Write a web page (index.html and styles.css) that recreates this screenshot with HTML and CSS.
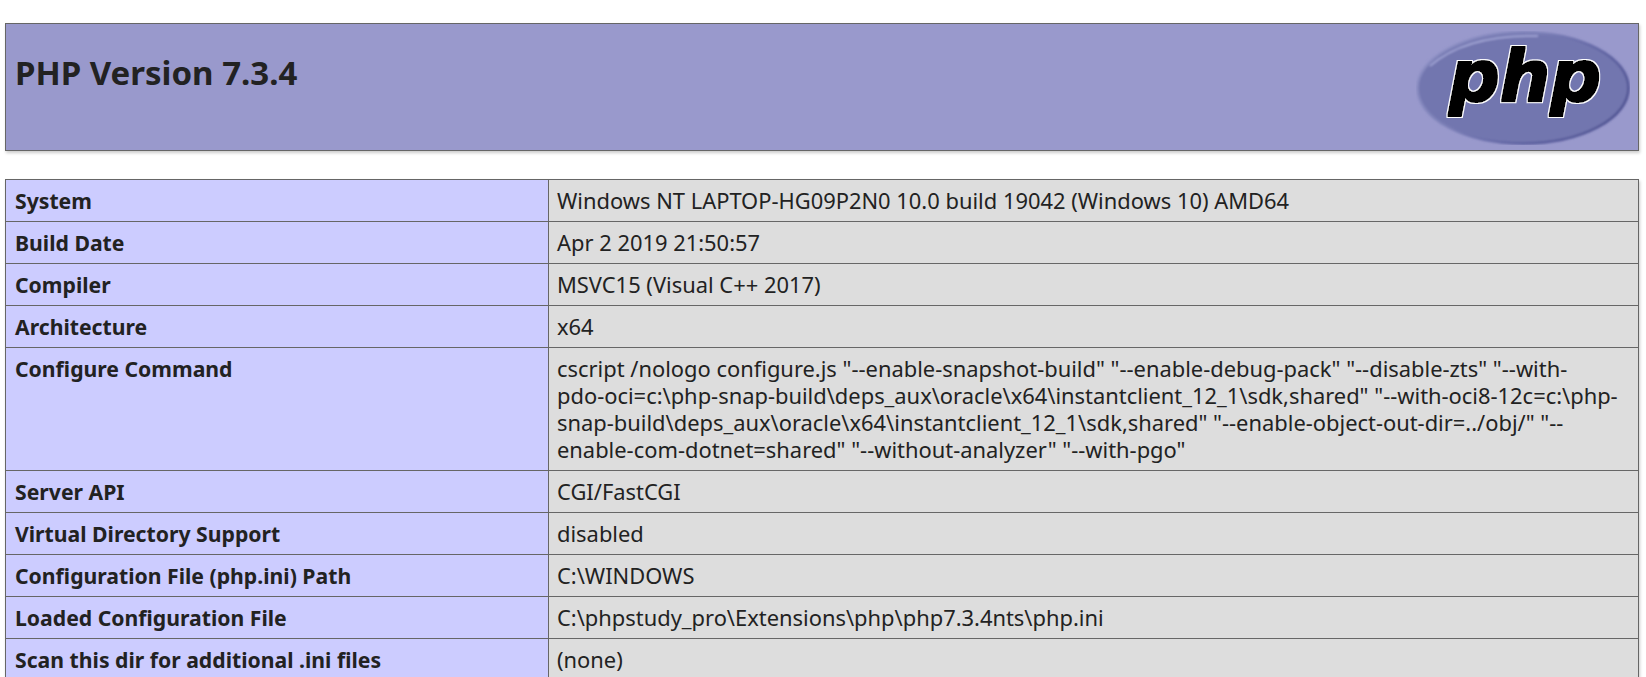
FILE: index.html
```html
<!DOCTYPE html>
<html lang="en">
<head>
<meta charset="utf-8">
<title>phpinfo()</title>
<link rel="stylesheet" href="styles.css">
</head>
<body>
<div class="center">
  <table class="info head">
    <tr class="h">
      <td class="headcell">
        <div class="headrow">
          <h1 class="title">PHP Version 7.3.4</h1>
          <svg class="logo" viewBox="0 0 214 114" aria-label="PHP logo">
            <defs>
              <linearGradient id="rim" x1="0" y1="0.2" x2="1" y2="0.7">
                <stop offset="0" stop-color="#8d90c4"/>
                <stop offset="0.4" stop-color="#7a7eb6"/>
                <stop offset="0.72" stop-color="#5a5e9e"/>
                <stop offset="1" stop-color="#4a4e8e"/>
              </linearGradient>
              <filter id="soft" x="-5%" y="-5%" width="110%" height="110%">
                <feGaussianBlur stdDeviation="0.8"/>
              </filter>
              <filter id="heavy" x="-10%" y="-10%" width="120%" height="120%">
                <feMorphology in="SourceAlpha" operator="dilate" radius="2.400" result="wide"/>
                <feFlood flood-color="#ffffff" result="white"/>
                <feComposite in="white" in2="wide" operator="in" result="outline"/>
                <feMorphology in="SourceAlpha" operator="dilate" radius="0.900" result="thick"/>
                <feFlood flood-color="#000000" result="black"/>
                <feComposite in="black" in2="thick" operator="in" result="ink"/>
                <feMerge result="merged">
                  <feMergeNode in="outline"/>
                  <feMergeNode in="ink"/>
                </feMerge>
                <feGaussianBlur in="merged" stdDeviation="0.450"/>
              </filter>
            </defs>
            <g filter="url(#soft)">
              <ellipse class="oval" cx="107" cy="57" rx="105.500" ry="55.500"/>
              <path class="shine" d="M14 35 C40 12 80 4 122 5"/>
            </g>
            <text class="logotext" x="33" y="70" textLength="152" lengthAdjust="spacingAndGlyphs" filter="url(#heavy)">php</text>
          </svg>
        </div>
      </td>
    </tr>
  </table>
  <table class="info body-table">
    <tr><td class="e">System</td><td class="v">Windows NT LAPTOP-HG09P2N0 10.0 build 19042 (Windows 10) AMD64</td></tr>
    <tr><td class="e">Build Date</td><td class="v">Apr 2 2019 21:50:57</td></tr>
    <tr><td class="e">Compiler</td><td class="v">MSVC15 (Visual C++ 2017)</td></tr>
    <tr><td class="e">Architecture</td><td class="v">x64</td></tr>
    <tr><td class="e">Configure Command</td><td class="v">cscript /nologo configure.js "--enable-snapshot-build" "--enable-debug-pack" "--disable-zts" "--with-<br>pdo-oci=c:\php-snap-build\deps_aux\oracle\x64\instantclient_12_1\sdk,shared" "--with-oci8-12c=c:\php-snap-build\deps_aux\oracle\x64\instantclient_12_1\sdk,shared" "--enable-object-out-dir=../obj/" "--enable-com-dotnet=shared" "--without-analyzer" "--with-pgo"</td></tr>
    <tr><td class="e">Server API</td><td class="v">CGI/FastCGI</td></tr>
    <tr><td class="e">Virtual Directory Support</td><td class="v">disabled</td></tr>
    <tr><td class="e">Configuration File (php.ini) Path</td><td class="v">C:\WINDOWS</td></tr>
    <tr><td class="e">Loaded Configuration File</td><td class="v">C:\phpstudy_pro\Extensions\php\php7.3.4nts\php.ini</td></tr>
    <tr><td class="e">Scan this dir for additional .ini files</td><td class="v">(none)</td></tr>
  </table>
</div>
</body>
</html>
```
FILE: styles.css
```css
html {
  overflow: hidden;
}
body {
  margin: 0;
  background: #fff;
  color: #222;
  font-family: "Noto Sans", "Open Sans", sans-serif;
  font-size: 21.900px;
  line-height: 27px;
}
.center {
  padding: 23px 7px 0 5px;
}
.info {
  width: 100%;
  table-layout: fixed;
  border-collapse: collapse;
  box-shadow: 1px 2px 3px #ccc;
}
.info td {
  border: 1px solid #666;
  vertical-align: top;
}
.head {
  margin-bottom: 28px;
}
.headcell {
  background: #99c;
  padding: 0;
}
.headrow {
  display: flex;
  justify-content: space-between;
  height: 126px;
  padding: 7px 8px 0 9px;
  box-sizing: border-box;
}
.title {
  margin: 0;
  padding-top: 20px;
  font-size: 33px;
  line-height: 44px;
  font-weight: 700;
}
.logo {
  width: 214px;
  height: 114px;
  flex: none;
}
.oval {
  fill: #7276af;
  stroke: url(#rim);
  stroke-width: 2.500px;
}
.shine {
  fill: none;
  stroke: #a9acdb;
  stroke-width: 1.500px;
}
.logotext {
  font-family: "DejaVu Sans", sans-serif;
  font-size: 71px;
  font-weight: 700;
  font-style: italic;
  fill: #000;
}
.e {
  width: 524px;
  background: #ccf;
  font-size: 21.200px;
  font-weight: 700;
  padding: 7px 9px;
}
.v {
  background: #ddd;
  padding: 7px 8px;
  overflow-wrap: anywhere;
}
```
